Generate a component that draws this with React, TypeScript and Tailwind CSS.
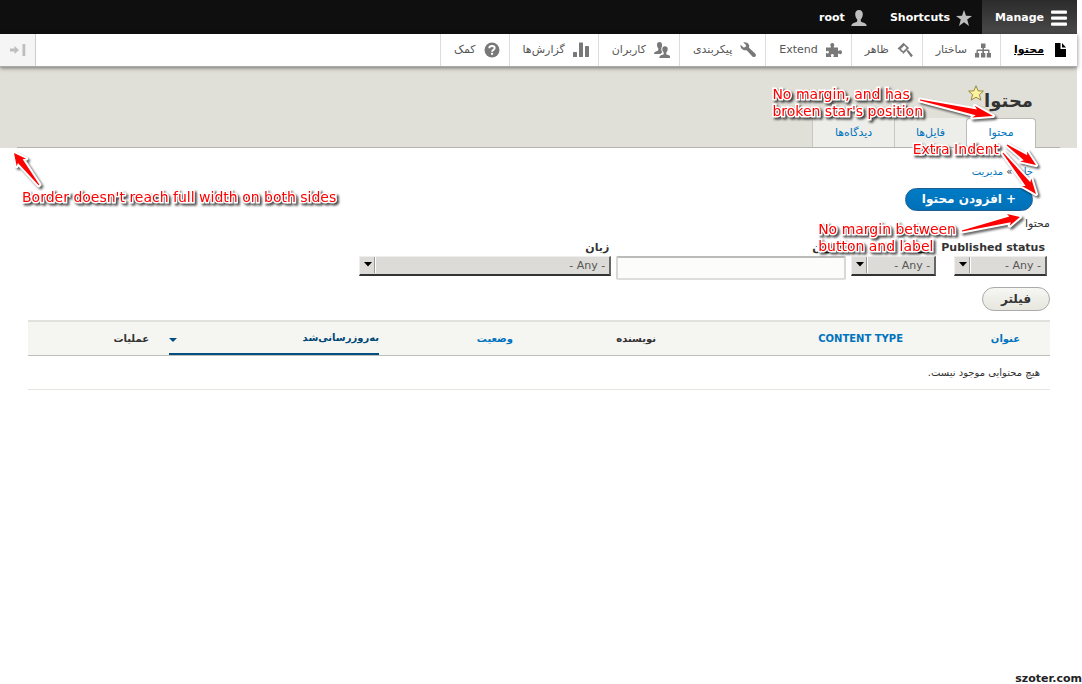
import React from 'react';

type Point = [number, number];

function Icon({ children, className = 'size-4' }: { children: React.ReactNode; className?: string }) {
  return (
    <svg viewBox="0 0 16 16" fill="currentColor" aria-hidden="true" className={`${className} shrink-0`}>
      {children}
    </svg>
  );
}

const icons = {
  menu: (
    <>
      <rect y="0.500" width="16" height="3.200" rx="1" />
      <rect y="6.500" width="16" height="3.200" rx="1" />
      <rect y="12.500" width="16" height="3.200" rx="1" />
    </>
  ),
  star: <path d="M8 0l2 5.8 6 .1-4.8 3.7L13 16l-5-3.7L3 16l1.800-6.400L0 5.900l6-.1z" />,
  person: (
    <path d="M8 0C5.500 0 4.200 1.800 4.200 4c0 2.400.9 4.300 2 5.300v1.500c0 .8-.5 1.200-1.300 1.400C2.300 12.800.6 13.500.2 16h15.600c-.4-2.500-2.100-3.200-4.700-3.800-.8-.2-1.300-.6-1.300-1.400V9.300c1.100-1 2-2.900 2-5.300 0-2.200-1.300-4-3.800-4z" />
  ),
  file: <path d="M3 1h5.500v6H14v8H3zM10 1l4 4.500h-4z" />,
  sitemap: (
    <path d="M6 1.500h4.500V6H9v1.500h4.500q1 0 1 1V11H16v4.500h-4.200V11h1.300V9H9v2h1.300v4.500H6V11h1.300V9H2.900v2h1.300v4.500H0V11h1.500V8.500q0-1 1-1h5V6H6z" />
  ),
  paint: (
    <>
      <path d="M6.500.8L.6 6.600l1 1 .8-.3.2 1.200 1 .2.300 1.200 1.200-.2 1 2.200 6-6z" />
      <path d="M7.300 3.500L3.800 7l2.500 2.300 3.300-3.400z" fill="white" />
      <path d="M9.500 9l1.400-1.200 5 5.600-1.800 1.900z" />
    </>
  ),
  puzzle: (
    <path d="M0 5.500h4.500c.8 0 .5-.8 0-1.500C3.800 2.500 4.800 1 6.300 1s2.500 1.500 1.800 3c-.5.700-.7 1.500 0 1.500H12v2.700c0 .9.800.7 1.500.3 1.200-.7 2.500.3 2.500 1.700s-1.300 2.500-2.500 1.700c-.7-.5-1.500-.6-1.500.3V15H7.800c-.6 0-.5-.7-.1-1.300.4-.8-.2-1.700-1.400-1.700s-1.800.9-1.400 1.700c.4.6.5 1.300-.1 1.300H0v-3.500c0-.6.7-.5 1.300-.1.800.4 1.500-.2 1.500-1.200s-.7-1.600-1.500-1.200c-.6.4-1.300.5-1.300-.1z" />
  ),
  wrench: (
    <path d="M.6 2.800l3 2.700 2-.5.4-2L3.300.5C5-.2 7.500.4 8.600 2.200c.8 1.300.7 2.500.4 3.600l6.200 5.800c.9.900.9 2.100.1 2.900-.8.800-2 .8-2.900-.1L6.600 8.200c-1.200.3-2.600.2-3.900-.7C.8 6.200.2 4.300.6 2.800z" />
  ),
  people: (
    <>
      <path d="M5.500 0C3.700 0 3 1.300 3 2.900c0 1.600.6 2.700 1.300 3.400v1.500c0 .7-.5.900-1.200 1.100C1.200 9.400.2 10 0 12h6.500c.4-.8 1-1.200 1.900-1.500C7.200 8.600 6.800 6 8 4.400V2.900C8 1.300 7.300 0 5.500 0z" />
      <path d="M11 4.200c-1.900 0-2.700 1.300-2.700 2.900 0 1.600.6 2.700 1.400 3.500v1.100c0 .6-.5.900-1.200 1.100-1.800.4-3 1-3.200 3.200h11.400c-.2-2.200-1.400-2.800-3.200-3.200-.7-.2-1.200-.5-1.200-1.100v-1.100c.8-.8 1.400-1.900 1.400-3.500 0-1.600-.8-2.900-2.700-2.900z" />
    </>
  ),
  bars: (
    <>
      <rect y="10" width="4" height="5" rx="0.500" />
      <rect x="6" y="0.500" width="4" height="14.500" rx="0.500" />
      <rect x="12" y="4" width="4" height="11" rx="0.500" />
    </>
  ),
  help: (
    <>
      <circle cx="8" cy="8" r="7.500" />
      <path d="M5.300 6.300C5.300 4.700 6.400 4 8 4s2.700.8 2.700 2.100c0 1.900-2.600 1.700-2.600 3.700" fill="none" stroke="white" strokeWidth="1.900" />
      <rect x="7" y="10.800" width="2.100" height="2" fill="white" />
    </>
  ),
  dock: <path d="M0 6.500h4.500V4L9 8l-4.500 4V9.500H0zM12.500 2h2.800v12h-2.800z" />,
};

const trayItems = [
  { label: 'محتوا', icon: icons.file, active: true },
  { label: 'ساختار', icon: icons.sitemap },
  { label: 'ظاهر', icon: icons.paint },
  { label: 'Extend', icon: icons.puzzle },
  { label: 'پیکربندی', icon: icons.wrench },
  { label: 'کاربران', icon: icons.people },
  { label: 'گزارش‌ها', icon: icons.bars },
  { label: 'کمک', icon: icons.help },
];

function TopBar() {
  return (
    <nav className="flex h-[34px] bg-[#0f0f0f] font-bold text-white">
      <a href="#manage" className="flex items-center gap-[7px] bg-linear-to-b from-[#2b2b2b] to-[#4a4a4a] pt-px pr-[10px] pl-[13px]">
        <Icon>{icons.menu}</Icon>
        Manage
      </a>
      <a href="#shortcuts" className="flex items-center gap-[6px] pt-px pr-[10px] pl-[13px]">
        <Icon className="size-4 text-[#bebebe]">{icons.star}</Icon>
        Shortcuts
      </a>
      <a href="#user" className="flex items-center gap-[6px] pt-px pr-[10px] pl-[13px]">
        <Icon className="size-4 text-[#bebebe]">{icons.person}</Icon>
        root
      </a>
    </nav>
  );
}

function Tray() {
  return (
    <nav className="relative flex h-[33px] border-b border-[#a9a9a5] bg-white text-[#565656] shadow-[0_1px_4px_rgba(0,0,0,0.5)]">
      {trayItems.map((item) => (
        <a
          key={item.label}
          href="#tray"
          className={`flex items-center gap-2 border-l border-[#ddd] pr-[9px] pl-[13px] ${item.active ? 'font-bold text-black underline' : ''}`}
        >
          <Icon className={item.active ? 'size-4 text-black' : 'size-4 text-[#787878]'}>{item.icon}</Icon>
          {item.label}
        </a>
      ))}
      <button type="button" aria-label="Dock" className="mr-auto flex w-9 items-center justify-center border-r border-[#ccc] bg-[#f5f5f5] text-[#bebebe]">
        <Icon>{icons.dock}</Icon>
      </button>
    </nav>
  );
}

function PageHeader() {
  return (
    <header className="bg-[#e0dfd8] px-[17px] pt-[18px]">
      <div className="flex h-8 items-start pr-[27px]">
        <h1 className="mt-[2px] text-[18px] leading-[28px] font-bold text-[#333]">محتوا</h1>
        <button type="button" aria-label="Add shortcut">
          <svg viewBox="0 0 16 16" className="size-4">
            <path d="M8 .8l2.100 5 5.300.3-4 3.600 1.400 5.400L8 12.200l-4.800 2.900 1.400-5.400-4-3.600 5.300-.3z" fill="#fbf3a0" stroke="#9a8840" />
          </svg>
        </button>
      </div>
      <div className="flex border-b border-[#b3b3af] pt-px pr-[24px] text-[#0074bd]">
        <a href="#content" className="-mb-px flex h-[30px] w-[70px] items-center justify-center rounded-t-[4px] border border-b-0 border-[#bcbcb6] bg-white pb-px">محتوا</a>
        <a href="#files" className="flex h-[29px] w-[72px] items-center justify-center border-l border-[#c8c8c3] bg-[#ededea]">فایل‌ها</a>
        <a href="#comments" className="flex h-[29px] w-[82px] items-center justify-center border-l border-[#c8c8c3] bg-[#ededea]">دیدگاه‌ها</a>
      </div>
    </header>
  );
}

function SelectField({ id, label, width }: { id: string; label: string; width: string }) {
  return (
    <div className="flex flex-col items-start">
      <label htmlFor={id} className="pr-[2px] font-bold whitespace-nowrap">{label}</label>
      <div className={`relative ${width}`}>
        <select
          id={id}
          className="block h-5 w-full appearance-none border border-t-[#eee] border-r-2 border-b-2 border-l-[#eee] border-r-[#666] border-b-[#333] bg-[#dcdbd7] pr-1 leading-4 text-[#555]"
        >
          <option>- Any -</option>
        </select>
        <svg viewBox="0 0 16 16" className="pointer-events-none absolute top-px left-px h-4 w-4" aria-hidden="true">
          <path d="M4 5h8L8 9.500z" fill="#000" />
          <path d="M14.500 0v16" stroke="#999" />
          <path d="M15.500 0v16" stroke="#fff" />
        </svg>
      </div>
    </div>
  );
}

function Filters() {
  return (
    <form onSubmit={(e) => e.preventDefault()}>
      <div className="mt-2 flex gap-[5px] pr-[3px]">
        <SelectField id="status" label="Published status" width="w-[93px]" />
        <SelectField id="type" label="نوع" width="w-[85px]" />
        <div className="flex flex-col">
          <label htmlFor="title" className="pr-[2px] font-bold">عنوان</label>
          <input id="title" type="text" className="h-6 w-[230px] rounded-[2px] border-2 border-t-[#bbb] border-r-[#d8d8d4] border-b-[#ddd] border-l-[#d8d8d4] bg-[#fcfcfa] px-1" />
        </div>
        <SelectField id="language" label="زبان" width="w-[252px]" />
      </div>
      <button
        type="submit"
        className="mt-[7px] flex h-6 w-[68px] items-center justify-center rounded-full border border-[#aaa] bg-linear-to-b from-[#f6f6f3] to-[#e7e7df] text-[12px] font-bold text-[#333]"
      >
        فیلتر
      </button>
    </form>
  );
}

function ContentTable() {
  return (
    <table className="mt-[9px] w-full table-fixed text-[10px]">
      <thead>
        <tr className="h-[34px] border-t-2 border-b border-t-[#e1e2dc] border-b-[#bebfb9] bg-[#f5f5f2] text-right">
          <th className="pr-[30px] text-[#0074bd]"><a href="#title">عنوان</a></th>
          <th className="w-[247px] pr-[10px] text-[#0074bd]"><a href="#type">CONTENT TYPE</a></th>
          <th className="w-[143px] pr-[10px]">نویسنده</th>
          <th className="w-[134px] pr-[10px] text-[#0074bd]"><a href="#status">وضعیت</a></th>
          <th className="w-[230px] px-[10px] text-[#004875]">
            <a href="#updated" className="flex h-[33px] items-center justify-between border-b-2 border-[#004f80]">
              به‌روزرسانی‌شد
              <svg viewBox="0 0 8 4" className="mt-1 h-1 w-2" aria-hidden="true"><path d="M0 0h8L4 4z" fill="#004f80" /></svg>
            </a>
          </th>
          <th className="w-[131px] pr-[10px]">عملیات</th>
        </tr>
      </thead>
      <tbody>
        <tr className="h-[34px] border-b border-[#e6e4df]">
          <td colSpan={6} className="pr-[10px]">هیچ محتوایی موجود نیست.</td>
        </tr>
      </tbody>
    </table>
  );
}

/* Tapered callout arrow, pointing from its thin tail to the tip. */
function arrowPath([x0, y0]: Point, [x1, y1]: Point, head: number) {
  const length = Math.hypot(x1 - x0, y1 - y0);
  const ux = (x1 - x0) / length;
  const uy = (y1 - y0) / length;
  const at = (along: number, across: number) => `${x0 + ux * along - uy * across},${y0 + uy * along + ux * across}`;
  const neck = length - head * 0.85;
  return `M${at(0, -0.5)} L${at(neck, -3)} L${at(length - head, -6)} L${at(length, 0)} L${at(length - head, 6)} L${at(neck, 3)} L${at(0, 0.5)}Z`;
}

function Arrow({ from, to, head }: { from: Point; to: Point; head: number }) {
  return (
    <path d={arrowPath(from, to, head)} fill="#f00" stroke="#fff" strokeWidth="4" strokeLinejoin="round" paintOrder="stroke" />
  );
}

const noteStyle =
  'absolute text-[14px] leading-[17px] whitespace-nowrap text-[#f00] [paint-order:stroke] [-webkit-text-stroke:3px_white] [filter:drop-shadow(2px_2px_1px_rgba(0,0,0,0.7))]';

function Annotations() {
  return (
    <div dir="ltr" className="pointer-events-none absolute inset-0">
      <p className={`${noteStyle} top-[86px] right-[154px]`}>No margin, and has<br />broken star's position</p>
      <p className={`${noteStyle} top-[141px] right-[78px]`}>Extra Indent</p>
      <p className={`${noteStyle} top-[221px] right-[121px]`}>No margin between<br />button and label</p>
      <p className={`${noteStyle} top-[189px] left-[22px]`}>Border doesn't reach full width on both sides</p>
      <svg width="177" height="260" className="absolute top-0 right-0 [filter:drop-shadow(2px_2px_1px_rgba(0,0,0,0.6))]" aria-hidden="true">
        <Arrow from={[20, 100]} to={[93, 116]} head={20} />
        <Arrow from={[107, 145]} to={[136, 165]} head={15} />
        <Arrow from={[103, 153]} to={[136, 194]} head={15} />
        <Arrow from={[62, 231]} to={[120, 217]} head={12} />
      </svg>
      <svg width="60" height="200" className="absolute top-0 left-0 [filter:drop-shadow(2px_2px_1px_rgba(0,0,0,0.6))]" aria-hidden="true">
        <Arrow from={[39, 185]} to={[14, 153]} head={12} />
      </svg>
    </div>
  );
}

export default function App() {
  return (
    <div className="relative min-h-screen bg-white pr-[5px] font-['DejaVu_Sans',sans-serif] text-[11px] leading-[16px] text-[#333]">
      <div dir="rtl" className="relative">
        <TopBar />
        <Tray />
        <PageHeader />
        <main className="pt-4 pr-[27px] pb-10 pl-[28px]">
          <div className="pr-[17px]">
            <p className="text-[10px]">
              <a href="#home" className="text-[#0074bd]">خانه</a> » <a href="#admin" className="text-[#0074bd]">مدیریت</a>
            </p>
            <a
              href="#add"
              className="mt-2 flex h-[23px] w-32 items-center justify-center rounded-full border border-[#1e5c90] bg-linear-to-b from-[#007bc6] to-[#0071b8] pb-px text-[12px] font-bold whitespace-nowrap text-white"
            >
              + افزودن محتوا
            </a>
          </div>
          <p className="mt-[5px]">محتوا</p>
          <Filters />
          <ContentTable />
        </main>
        <Annotations />
      </div>
      <p className="absolute right-0 bottom-0 text-[11px] leading-[10px] font-bold text-[#222]">szoter.com</p>
    </div>
  );
}
